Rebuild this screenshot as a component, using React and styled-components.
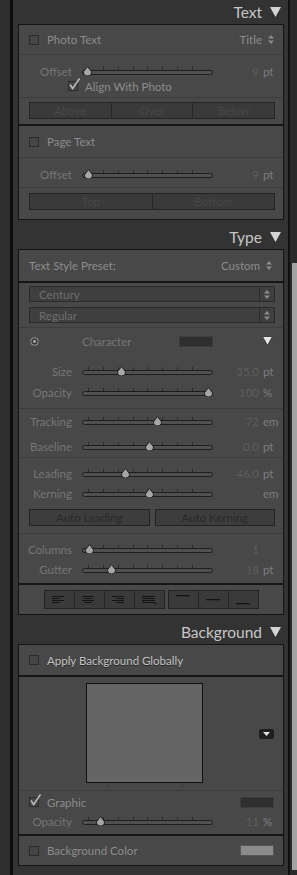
import React from "react";
import styled, { createGlobalStyle } from "styled-components";

const GlobalStyle = createGlobalStyle`
  html, body {
    margin: 0;
    padding: 0;
    background: #2e2e2e;
  }
  body {
    font-family: "Lato", "Liberation Sans", sans-serif;
    -webkit-font-smoothing: antialiased;
  }
`;

const Frame = styled.div`
  display: flex;
  width: 297px;
  height: 875px;
  overflow: hidden;
  background: #2e2e2e;
`;

const LeftGutter = styled.div`
  flex: none;
  width: 10px;
  background: #2e2e2e;
  border-right: 3px solid #0c0c0c;
`;

const Panel = styled.div`
  flex: 1;
  min-width: 0;
  display: flex;
  flex-direction: column;
  padding: 0 4px 0 5px;
  background: #333333;
  border-right: 2px solid #111111;
`;

const ScrollTrack = styled.div`
  flex: none;
  width: 7px;
  box-sizing: border-box;
  display: flex;
  flex-direction: column;
  padding: 263px 0 5px 2px;
  background: #2a2a2a;
`;

const ScrollThumb = styled.div`
  flex: 1;
  background: #a3a3a3;
`;

const Header = styled.div`
  flex: none;
  height: 29px;
  box-sizing: border-box;
  display: flex;
  align-items: center;
  justify-content: flex-end;
  gap: 8px;
  padding: 4px 3px 0 0;
  margin-top: ${(p) => (p.$scrolled ? "-5px" : "0")};
  color: #c6c6c6;
  font-size: 15.5px;
`;

const Box = styled.div`
  flex: none;
  display: flex;
  flex-direction: column;
  background: #484848;
  border: 1px solid #141414;
`;

const Divider = styled.div`
  flex: none;
  height: ${(p) => (p.$thick ? "2px" : "1px")};
  background: ${(p) => (p.$thick ? "#161616" : "#3c3c3c")};
`;

const Section = styled.div`
  display: flex;
  flex-direction: column;
  gap: ${(p) => p.$gap || 0}px;
  padding: ${(p) => p.$pad || "0"};
`;

const CheckRow = styled.div`
  height: ${(p) => p.$h || 16}px;
  display: flex;
  align-items: center;
  gap: 8px;
  padding: 0 9px 0 10px;
  color: ${(p) => (p.$bright ? "#c4c4c4" : "#8c8c8c")};
  text-shadow: ${(p) => (p.$bright ? "0 1px 0 #262626" : "none")};
  font-size: 11.5px;
`;

const Spacer = styled.div`
  flex: 1;
`;

const CheckBoxFrame = styled.div`
  position: relative;
  flex: none;
  width: 8px;
  height: 8px;
  border: 1px solid #2b2b2b;
  background: #454545;
`;

const CheckMark = styled.svg`
  position: absolute;
  left: 0;
  top: -4px;
`;

const CheckBox = ({ checked }) => (
  <CheckBoxFrame>
    {checked && (
      <CheckMark width="12" height="12" viewBox="0 0 12 12">
        <path d="M1 6.5 L3.6 10.5 L10.5 0.5" fill="none" stroke="#b8b8b8" strokeWidth="1.6" />
      </CheckMark>
    )}
  </CheckBoxFrame>
);

const Stepper = () => (
  <svg width="6" height="9" viewBox="0 0 6 9">
    <path d="M0 3.5 L3 0 L6 3.5 Z M0 5.5 L3 9 L6 5.5 Z" fill="#8c8c8c" />
  </svg>
);

const Picker = styled.div`
  display: flex;
  align-items: center;
  gap: 6px;
  color: #8c8c8c;
`;

const SliderRow = styled.div`
  height: 16px;
  display: grid;
  grid-template-columns: 63px 131px 46px 1fr;
  align-items: center;
  font-size: 11.5px;
`;

const Label = styled.div`
  padding-right: 10px;
  text-align: right;
  color: #767676;
`;

const SliderBox = styled.div`
  position: relative;
  height: 16px;
  display: flex;
  flex-direction: column;
  justify-content: center;
`;

const Ticks = styled.div`
  height: 3px;
  margin: 0 6px;
  background: repeating-linear-gradient(
    to right,
    #2c2c2c 0 1px,
    transparent 1px 14.875px
  );
`;

const Track = styled.div`
  height: 3px;
  border: 1px solid #1e1e1e;
  border-radius: 3px;
  background: #505050;
`;

const Thumb = styled.svg`
  position: absolute;
  top: 3px;
`;

const Slider = ({ value }) => (
  <SliderBox>
    <Ticks />
    <Track />
    <Thumb
      width="11"
      height="10"
      viewBox="0 0 11 10"
      style={{ left: `${Math.round(value * 121)}px` }}
    >
      <path
        d="M5.5 0.6 L9.4 5.6 A4 3.6 0 1 1 1.6 5.6 Z"
        fill="#a6a6a6"
        stroke="#1e1e1e"
        strokeWidth="1"
      />
    </Thumb>
  </SliderBox>
);

const Num = styled.div`
  text-align: right;
  color: #5e5e5e;
`;

const Unit = styled.div`
  padding-left: 4px;
  color: #7e7e7e;
`;

const SliderLine = ({ label, value, num, unit }) => (
  <SliderRow>
    <Label>{label}</Label>
    <Slider value={value} />
    <Num>{num}</Num>
    <Unit>{unit}</Unit>
  </SliderRow>
);

const IndentRow = styled.div`
  height: 14px;
  display: flex;
  align-items: center;
  gap: 7px;
  padding-left: 49px;
  color: #8c8c8c;
  font-size: 11.5px;
`;

const Segmented = styled.div`
  height: ${(p) => p.$h || 15}px;
  display: flex;
  margin: 0 8px 0 10px;
  border: 1px solid #232323;
  background: #3a3a3a;
`;

const Segment = styled.div`
  flex: 1;
  display: flex;
  align-items: center;
  justify-content: center;
  color: #474747;
  font-size: 11.5px;
  & + & {
    border-left: 1px solid #262626;
  }
`;

const PairRow = styled.div`
  display: flex;
  gap: 5px;
  margin: 4px 8px 0 10px;
`;

const PairButton = styled.div`
  flex: 1;
  height: 15px;
  display: flex;
  align-items: center;
  justify-content: center;
  border: 1px solid #232323;
  background: #3d3d3d;
  color: #2a2a2a;
  font-size: 11.5px;
`;

const PresetRow = styled.div`
  height: 31px;
  display: flex;
  align-items: center;
  padding: 0 11px 0 10px;
  color: #8c8c8c;
  font-size: 11.5px;
`;

const Dropdown = styled.div`
  height: 14px;
  display: flex;
  margin: 0 8px 0 10px;
  border: 1px solid #2a2a2a;
  background: #3f3f3f;
  color: #6e6e6e;
  font-size: 11.5px;
`;

const DropdownText = styled.div`
  flex: 1;
  display: flex;
  align-items: center;
  padding-left: 9px;
`;

const DropdownArrow = styled.div`
  width: 14px;
  display: flex;
  align-items: center;
  justify-content: center;
  border-left: 1px solid #2a2a2a;
`;

const CharacterRow = styled.div`
  height: 26px;
  display: grid;
  grid-template-columns: 63px 97px 32px 1fr;
  align-items: center;
  color: #767676;
  font-size: 11.5px;
`;

const RadioCell = styled.div`
  display: flex;
  padding-left: 11px;
`;

const Swatch = styled.div`
  width: ${(p) => p.$w || 32}px;
  height: 9px;
  border: 1px solid ${(p) => (p.$light ? "#555" : "#3c3c3c")};
  background: ${(p) => (p.$light ? "#8b8b8b" : "#2e2e2e")};
`;

const DisclosureCell = styled.div`
  display: flex;
  justify-content: flex-end;
  padding-right: 10px;
`;

const AlignBar = styled.div`
  height: 29px;
  display: flex;
  align-items: center;
  justify-content: center;
  gap: 3px;
`;

const AlignGroup = styled.div`
  display: flex;
  border: 1px solid #232323;
  background: #3a3a3a;
`;

const AlignButton = styled.div`
  width: 29px;
  height: 17px;
  display: flex;
  align-items: center;
  justify-content: center;
  & + & {
    border-left: 1px solid #262626;
  }
`;

const PreviewArea = styled.div`
  height: 113px;
  display: flex;
  align-items: center;
  padding: 0 9px 0 67px;
`;

const PreviewSquare = styled.div`
  position: relative;
  align-self: flex-start;
  margin-top: 6px;
  width: 115px;
  height: 98px;
  border: 1px solid #111;
  background: #656565;
  &::after {
    content: "";
    position: absolute;
    left: 20px;
    right: 19px;
    bottom: -5px;
    height: 4px;
    border-left: 1px solid #3b3b3b;
    border-right: 1px solid #3b3b3b;
  }
`;

const MiniMenu = styled.div`
  width: 15px;
  height: 10px;
  display: flex;
  align-items: center;
  justify-content: center;
  border-radius: 2px;
  background: #1f1f1f;
`;

const HeaderTriangle = () => (
  <svg width="11" height="10" viewBox="0 0 11 10">
    <path d="M0 0 H11 L5.5 10 Z" fill="#d4d4d4" />
  </svg>
);

const Radio = () => (
  <svg width="9" height="9" viewBox="0 0 9 9">
    <circle cx="4.5" cy="4.5" r="3.8" fill="#3a3a3a" stroke="#9c9c9c" strokeWidth="1" />
    <circle cx="4.5" cy="4.5" r="1.4" fill="#b0b0b0" />
  </svg>
);

const WhiteTriangle = () => (
  <svg width="11" height="10" viewBox="0 0 11 10">
    <path d="M0.5 0.5 H10.5 L5.5 9.5 Z" fill="#e6e6e6" stroke="#2a2a2a" strokeWidth="0.8" />
  </svg>
);

const AlignIcon = ({ kind }) => {
  const lines = {
    left: [[0, 12], [0, 8], [0, 12], [0, 8]],
    center: [[0, 12], [2, 8], [0, 12], [2, 8]],
    right: [[0, 12], [4, 8], [0, 12], [4, 8]],
    justify: [[0, 13], [0, 13], [0, 13], [0, 13]],
  }[kind];
  return (
    <svg width="16" height="10" viewBox="0 0 16 10">
      {lines.map(([x, w], i) => (
        <rect key={i} x={x + 1} y={1 + i * 2} width={w} height="1" fill="#141414" />
      ))}
      {kind === "justify" && <path d="M13 8 H16 L14.5 9.8 Z" fill="#141414" />}
    </svg>
  );
};

const VAlignIcon = ({ pos }) => {
  const y = { top: 1, middle: 5, bottom: 9 }[pos];
  return (
    <svg width="14" height="12" viewBox="0 0 14 12">
      <rect x="0" y={y} width="14" height="1.3" fill="#141414" />
    </svg>
  );
};

const App = () => {
  return (
    <>
      <GlobalStyle />
      <Frame>
        <LeftGutter />
        <Panel>
          <Header $scrolled>
            Text <HeaderTriangle />
          </Header>
          <Box>
            <CheckRow $h={29}>
              <CheckBox />
              Photo Text
              <Spacer />
              <Picker>
                Title <Stepper />
              </Picker>
            </CheckRow>
            <Divider />
            <Section $pad="8px 0 4px">
              <SliderLine label="Offset" value={0} num="9" unit="pt" />
              <IndentRow>
                <CheckBox checked />
                Align With Photo
              </IndentRow>
            </Section>
            <Divider />
            <Section $pad="4px 0 5px">
              <Segmented>
                <Segment>Above</Segment>
                <Segment>Over</Segment>
                <Segment>Below</Segment>
              </Segmented>
            </Section>
            <Divider $thick />
            <CheckRow $h={31}>
              <CheckBox />
              Page Text
            </CheckRow>
            <Divider />
            <Section $pad="8px 0 5px">
              <SliderLine label="Offset" value={0.01} num="9" unit="pt" />
            </Section>
            <Divider />
            <Section $pad="5px 0 9px">
              <Segmented>
                <Segment>Top</Segment>
                <Segment>Bottom</Segment>
              </Segmented>
            </Section>
          </Box>

          <Header>
            Type <HeaderTriangle />
          </Header>
          <Box>
            <PresetRow>
              Text Style Preset:
              <Spacer />
              <Picker>
                Custom <Stepper />
              </Picker>
            </PresetRow>
            <Divider $thick />
            <Section $gap={5} $pad="3px 0 4px">
              <Dropdown>
                <DropdownText>Century</DropdownText>
                <DropdownArrow>
                  <Stepper />
                </DropdownArrow>
              </Dropdown>
              <Dropdown>
                <DropdownText>Regular</DropdownText>
                <DropdownArrow>
                  <Stepper />
                </DropdownArrow>
              </Dropdown>
            </Section>
            <Divider />
            <Section $gap={5} $pad="0 0 8px">
              <CharacterRow>
                <RadioCell>
                  <Radio />
                </RadioCell>
                <span>Character</span>
                <Swatch />
                <DisclosureCell>
                  <WhiteTriangle />
                </DisclosureCell>
              </CharacterRow>
              <Section $pad="4px 0 0" $gap={5}>
                <SliderLine label="Size" value={0.28} num="35.0" unit="pt" />
                <SliderLine label="Opacity" value={1} num="100" unit="%" />
              </Section>
            </Section>
            <Divider />
            <Section $gap={9} $pad="4px 0 3px">
              <SliderLine label="Tracking" value={0.58} num="72" unit="em" />
              <SliderLine label="Baseline" value={0.51} num="0.0" unit="pt" />
            </Section>
            <Divider />
            <Section $gap={4} $pad="7px 0 7px">
              <SliderLine label="Leading" value={0.31} num="46.0" unit="pt" />
              <SliderLine label="Kerning" value={0.51} num="" unit="em" />
              <PairRow>
                <PairButton>Auto Leading</PairButton>
                <PairButton>Auto Kerning</PairButton>
              </PairRow>
            </Section>
            <Divider />
            <Section $gap={4} $pad="7px 0 6px">
              <SliderLine label="Columns" value={0.02} num="1" unit="" />
              <SliderLine label="Gutter" value={0.2} num="18" unit="pt" />
            </Section>
            <Divider $thick />
            <AlignBar>
              <AlignGroup>
                <AlignButton>
                  <AlignIcon kind="left" />
                </AlignButton>
                <AlignButton>
                  <AlignIcon kind="center" />
                </AlignButton>
                <AlignButton>
                  <AlignIcon kind="right" />
                </AlignButton>
                <AlignButton>
                  <AlignIcon kind="justify" />
                </AlignButton>
              </AlignGroup>
              <AlignGroup>
                <AlignButton>
                  <VAlignIcon pos="top" />
                </AlignButton>
                <AlignButton>
                  <VAlignIcon pos="middle" />
                </AlignButton>
                <AlignButton>
                  <VAlignIcon pos="bottom" />
                </AlignButton>
              </AlignGroup>
            </AlignBar>
          </Box>

          <Header>
            Background <HeaderTriangle />
          </Header>
          <Box>
            <CheckRow $h={30} $bright>
              <CheckBox />
              Apply Background Globally
            </CheckRow>
            <Divider $thick />
            <PreviewArea>
              <PreviewSquare />
              <Spacer />
              <MiniMenu>
                <svg width="7" height="4" viewBox="0 0 7 4">
                  <path d="M0 0 H7 L3.5 4 Z" fill="#e0e0e0" />
                </svg>
              </MiniMenu>
            </PreviewArea>
            <Divider />
            <Section $gap={3} $pad="3px 0 5px">
              <CheckRow>
                <CheckBox checked />
                Graphic
                <Spacer />
                <Swatch />
              </CheckRow>
              <SliderLine label="Opacity" value={0.11} num="11" unit="%" />
            </Section>
            <Divider $thick />
            <CheckRow $h={29}>
              <CheckBox />
              Background Color
              <Spacer />
              <Swatch $light />
            </CheckRow>
          </Box>
        </Panel>
        <ScrollTrack>
          <ScrollThumb />
        </ScrollTrack>
      </Frame>
    </>
  );
};

export default App;
